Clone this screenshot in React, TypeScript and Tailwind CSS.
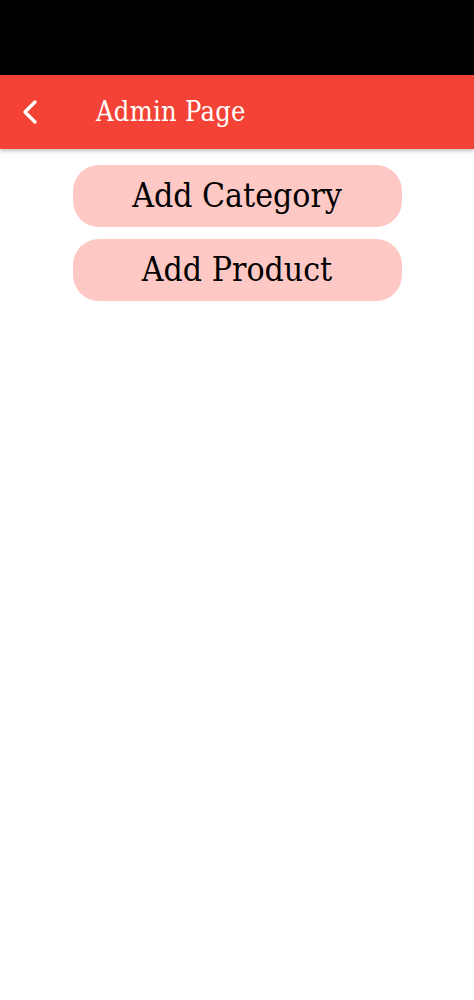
export default function App() {
  const serif = { fontFamily: '"DejaVu Serif Condensed", "DejaVu Serif", "Liberation Serif", serif' };
  return (
    <div className="min-h-[1000px] w-full bg-white">
      {/* status bar */}
      <div className="h-[75px] bg-black" />

      {/* app bar */}
      <header className="relative z-10 flex h-[74px] items-center bg-[#f44336] shadow-[0_2px_4px_rgba(0,0,0,0.25)]">
        <button className="ml-[18px] flex h-[28px] w-[24px] items-center justify-center">
          <svg width="22" height="26" viewBox="0 0 22 26" fill="none">
            <path d="M16 3 L6 13 L16 23" stroke="white" strokeWidth="3.4" strokeLinecap="round" strokeLinejoin="round" />
          </svg>
        </button>
        <h1 className="ml-[54px] font-stretch-condensed text-[27px] tracking-[0.3px] text-white" style={serif}>
          Admin Page
        </h1>
      </header>

      {/* actions */}
      <main className="flex flex-col items-center gap-[12px] pt-[16px]">
        {["Add Category", "Add Product"].map((label) => (
          <button
            key={label}
            className="flex h-[62px] w-[329px] items-center justify-center rounded-[26px] bg-[#fec8c5] font-stretch-condensed text-[33.5px] text-black"
            style={serif}
          >
            {label}
          </button>
        ))}
      </main>
    </div>
  );
}
